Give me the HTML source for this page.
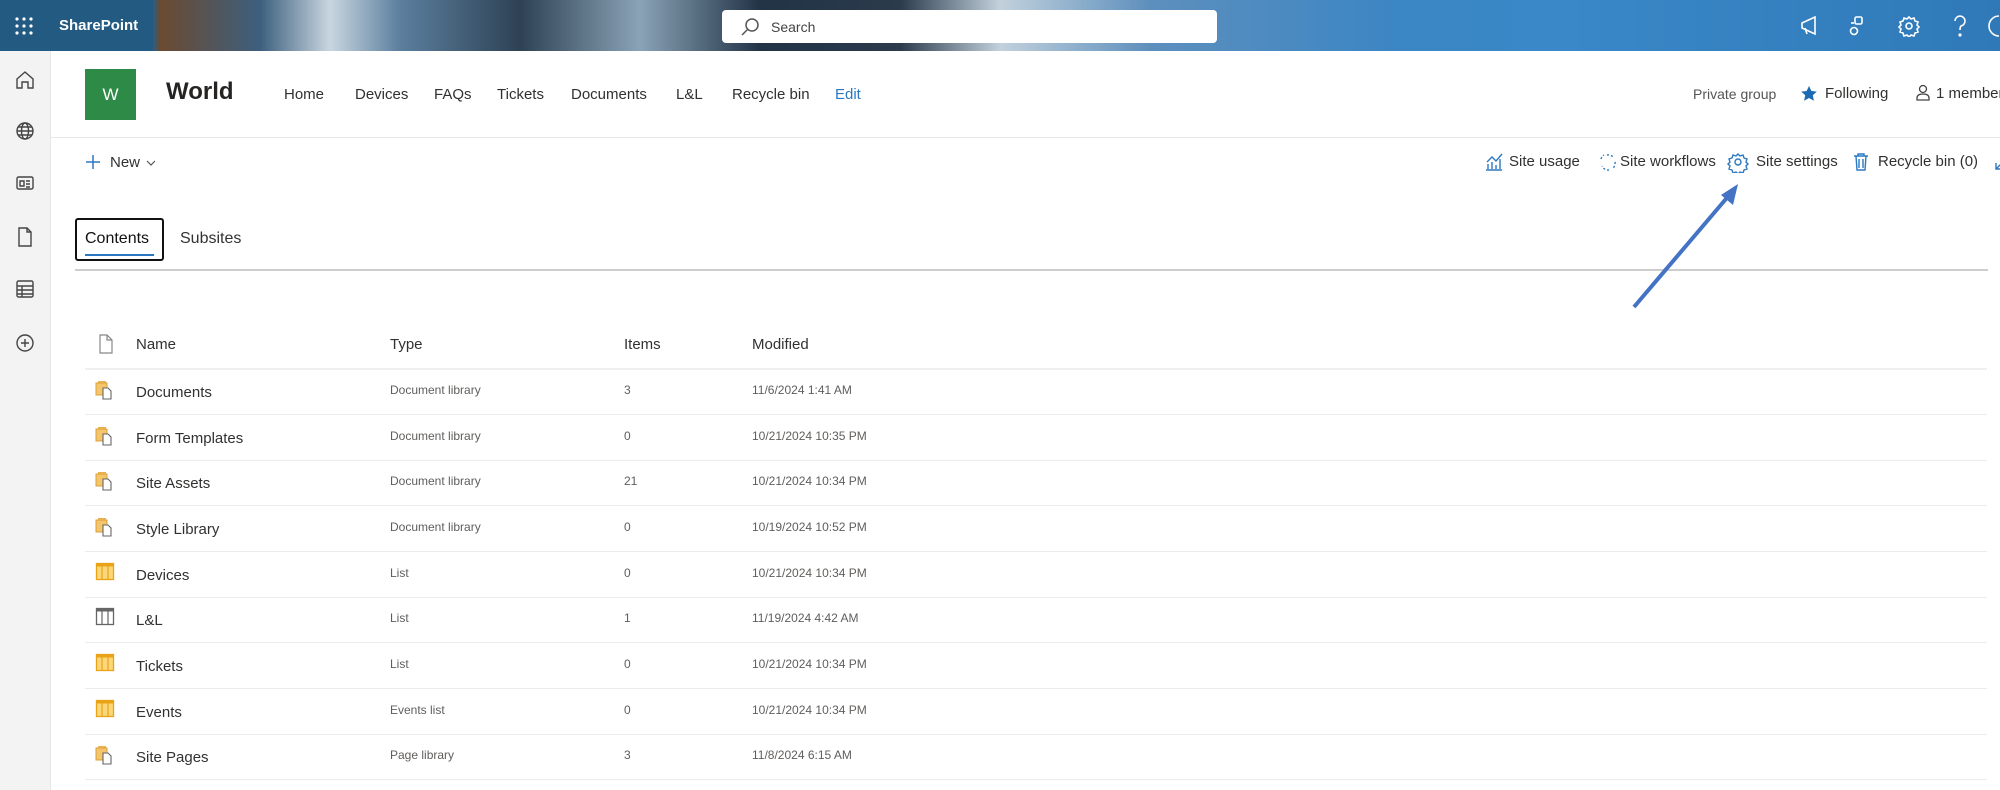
<!DOCTYPE html>
<html><head><meta charset="utf-8"><style>
*{margin:0;padding:0;box-sizing:border-box}
body{width:2000px;height:790px;overflow:hidden;background:#fff;font-family:"Liberation Sans",sans-serif;color:#323130;position:relative}
.a{position:absolute;white-space:nowrap}
.top{position:absolute;left:0;top:0;width:2000px;height:51px;background:linear-gradient(90deg,#2a5f86 0,#2a5f86 153px,#6b4a30 160px,#3d5f7e 260px,#c9d6e0 330px,#5b7f9e 400px,#2e4254 520px,#8aa3b6 640px,#223346 760px,#2b3b4c 900px,#c2d1dc 1000px,#5d8fbd 1150px,#3b86c4 1400px,#3a88c8 1560px,#2f79b8 2000px)}
.sp{position:absolute;left:0;top:0;width:153px;height:51px;background:#235a82}
.rail{position:absolute;left:0;top:51px;width:51px;height:739px;background:#f3f3f3;border-right:1px solid #e6e6e6}
.nav{font-size:15px;color:#323130;top:86px}
.cmd{font-size:15px;color:#323130;top:153px}
.hd{font-size:15px;color:#323130;top:336px}
.nm{font-size:15px;color:#323130}
.sm{font-size:12px;color:#605e5c}
.hl{position:absolute;left:85px;width:1902px;height:1px;background:#ececec}
</style></head><body>
<div class="top"></div>
<div class="sp"></div>
<svg class="a" style="left:15px;top:17px" width="18" height="18" fill="#fff"><g><circle cx="2" cy="2" r="1.6"/><circle cx="9" cy="2" r="1.6"/><circle cx="16" cy="2" r="1.6"/><circle cx="2" cy="9" r="1.6"/><circle cx="9" cy="9" r="1.6"/><circle cx="16" cy="9" r="1.6"/><circle cx="2" cy="16" r="1.6"/><circle cx="9" cy="16" r="1.6"/><circle cx="16" cy="16" r="1.6"/></g></svg>
<div class="a" style="left:59px;top:17px;color:#fff;font-weight:bold;font-size:15px">SharePoint</div>
<div class="a" style="left:722px;top:10px;width:495px;height:33px;background:#fff;border-radius:4px"></div>
<svg class="a" style="left:740px;top:17px" width="20" height="20" fill="none" stroke="#555" stroke-width="1.5"><circle cx="12" cy="8" r="6"/><path d="M8 12L2 18"/></svg>
<div class="a" style="left:771px;top:19px;font-size:14px;color:#444">Search</div>
<svg class="a" style="left:1799px;top:15px" width="200" height="22" fill="none" stroke="#fff" stroke-width="1.6">
<path d="M3 8L16 2V19L3 13Z M6 13L8 19"/>
<rect x="56" y="2" width="7" height="7" rx="1.5"/><circle cx="55" cy="16" r="3.5"/><path d="M52 8h3"/>
<circle cx="110" cy="11" r="3"/><path d="M110 2l2 2 3-1 1 3 3 1-1 3 2 2-2 2 1 3-3 1-1 3-3-1-2 2-2-2-3 1-1-3-3-1 1-3-2-2 2-2-1-3 3-1 1-3 3 1z"/>
<path d="M156 6a5 5 0 1 1 6 5c-1 1-1 2-1 4"/><circle cx="161" cy="20" r=".8" fill="#fff"/>
<circle cx="200" cy="11" r="10"/>
</svg>
<div class="rail"></div>
<svg class="a" style="left:14px;top:69px" width="22" height="290" fill="none" stroke="#444" stroke-width="1.4">
<path d="M3 10L11 3L19 10V19H14V13H8V19H3Z"/>
<g transform="translate(0,51)"><circle cx="11" cy="11" r="8"/><ellipse cx="11" cy="11" rx="3.5" ry="8"/><path d="M3 11h16M4.5 7h13M4.5 15h13"/></g>
<g transform="translate(0,103)"><rect x="3" y="5" width="16" height="12" rx="1.5"/><path d="M6 9h4v5H6zM12 9h4M12 12h4M12 15h4"/></g>
<g transform="translate(0,157)"><path d="M5 2h8l4 4v14H5Z M13 2v4h4"/></g>
<g transform="translate(0,209)"><rect x="3" y="3" width="16" height="16" rx="1.5"/><path d="M3 8h16M3 12h16M3 16h16M8 8v11"/></g>
<g transform="translate(0,263)"><circle cx="11" cy="11" r="8"/><path d="M11 7v8M7 11h8"/></g>
</svg>
<div class="a" style="left:85px;top:69px;width:51px;height:51px;background:#2e8b47;color:#fff;font-size:17px;line-height:51px;text-align:center">W</div>
<div class="a" style="left:166px;top:78px;font-size:24px;font-weight:bold;color:#252423">World</div>
<div class="a nav" style="left:284px">Home</div>
<div class="a nav" style="left:355px">Devices</div>
<div class="a nav" style="left:434px">FAQs</div>
<div class="a nav" style="left:497px">Tickets</div>
<div class="a nav" style="left:571px">Documents</div>
<div class="a nav" style="left:676px">L&amp;L</div>
<div class="a nav" style="left:732px">Recycle bin</div>
<div class="a nav" style="left:835px;color:#2b78c2">Edit</div>
<div class="a" style="left:1693px;top:86px;font-size:14px;color:#555">Private group</div>
<svg class="a" style="left:1800px;top:85px" width="18" height="18"><path d="M9 1l2.4 5 5.4.6-4 3.7 1.1 5.4L9 13l-4.9 2.7 1.1-5.4-4-3.7 5.4-.6z" fill="#1c6ab3"/></svg>
<div class="a" style="left:1825px;top:85px;font-size:15px;color:#323130">Following</div>
<svg class="a" style="left:1915px;top:84px" width="16" height="18" fill="none" stroke="#444" stroke-width="1.3"><circle cx="8" cy="5" r="3.5"/><path d="M2 16v-2q0-4 6-4t6 4v2z"/></svg>
<div class="a" style="left:1936px;top:85px;font-size:15px;color:#323130">1 member</div>
<div class="a" style="left:51px;top:137px;width:1949px;height:1px;background:#e8e8e8"></div>
<svg class="a" style="left:85px;top:154px" width="16" height="16" stroke="#2b78c2" stroke-width="1.5"><path d="M8 1v14M1 8h14"/></svg>
<div class="a cmd" style="left:110px;top:154px">New</div>
<svg class="a" style="left:146px;top:159px" width="10" height="8" fill="none" stroke="#555" stroke-width="1.2"><path d="M1 2l4 4 4-4"/></svg>
<svg class="a" style="left:1484px;top:151px" width="520" height="22" fill="none" stroke="#2b78c2" stroke-width="1.4">
<path d="M2 19h16M4 18v-5M8 18v-7M12 18v-4M16 18V8M3 11l5-5 4 4 6-7"/>
<path d="M123 4a7 7 0 0 1 7 3M131 11a7 7 0 0 1-3 7M125 19a7 7 0 0 1-7-4M117 8a7 7 0 0 1 3-4" stroke-dasharray="2 2"/>
<g transform="translate(245,2)"><circle cx="9" cy="9" r="3"/><path d="M9 1l2 2 3-1 1 3 3 1-1 3 2 2-2 2 1 3-3 1-1 3-3-1-2 2-2-2-3 1-1-3-3-1 1-3-2-2 2-2-1-3 3-1 1-3 3 1z"/></g>
<path d="M370 5h14M374 5V3h6v2M372 5l1 14h8l1-14M375 8v9M379 8v9"/>
<path d="M512 18l6-6M512 12v6h6"/>
</svg>
<div class="a cmd" style="left:1509px">Site usage</div>
<div class="a cmd" style="left:1620px">Site workflows</div>
<div class="a cmd" style="left:1756px">Site settings</div>
<div class="a cmd" style="left:1878px">Recycle bin (0)</div>
<div class="a" style="left:75px;top:218px;width:89px;height:43px;border:2px solid #111;border-radius:3px"></div>
<div class="a" style="left:85px;top:230px;font-size:16px;color:#111">Contents</div>
<div class="a" style="left:85px;top:254px;width:69px;height:2px;background:#2b78c2"></div>
<div class="a" style="left:180px;top:230px;font-size:16px;color:#333">Subsites</div>
<div class="a" style="left:75px;top:269px;width:1913px;height:2px;background:#cdcdcd"></div>
<svg class="a" style="left:1620px;top:175px" width="130" height="140"><path d="M14 132L111 18" stroke="#4472c4" stroke-width="4"/><path d="M118 9L101 20L113 30Z" fill="#4472c4"/></svg>
<svg class="a" style="left:98px;top:334px" width="16" height="20" fill="none" stroke="#888" stroke-width="1.2"><path d="M2 1h7l5 5v13H2Z M9 1v5h5"/></svg>
<div class="a hd" style="left:136px">Name</div>
<div class="a hd" style="left:390px">Type</div>
<div class="a hd" style="left:624px">Items</div>
<div class="a hd" style="left:752px">Modified</div>
<div class="hl" style="top:368px;height:2px;background:#efefef"></div>
<div id="rows"></div>
<script>
var R=[["Documents","Document library","3","11/6/2024 1:41 AM","d"],["Form Templates","Document library","0","10/21/2024 10:35 PM","d"],["Site Assets","Document library","21","10/21/2024 10:34 PM","d"],["Style Library","Document library","0","10/19/2024 10:52 PM","d"],["Devices","List","0","10/21/2024 10:34 PM","l"],["L&L","List","1","11/19/2024 4:42 AM","g"],["Tickets","List","0","10/21/2024 10:34 PM","l"],["Events","Events list","0","10/21/2024 10:34 PM","l"],["Site Pages","Page library","3","11/8/2024 6:15 AM","d"]];
var h="";
R.forEach(function(r,i){var y=369+i*45.65;
var ic;
if(r[4]=="d")ic='<svg class="a" style="left:95px;top:'+(y+11)+'px" width="20" height="20"><rect x="1" y="3" width="11" height="12" fill="#f4c56a" stroke="#d9a03c"/><rect x="3" y="1" width="8" height="3" fill="#e9b04f"/><path d="M8 8h5l3 3v8H8Z" fill="#fff" stroke="#666" stroke-width="1.1"/></svg>';
else{var c=r[4]=="l"?"#e8a317":"#666",f=r[4]=="l"?"#fbd77a":"#fff";
ic='<svg class="a" style="left:95px;top:'+(y+10)+'px" width="20" height="20"><rect x="1.5" y="1.5" width="17" height="16" fill="'+f+'" stroke="'+c+'" stroke-width="1.3"/><rect x="1.5" y="1.5" width="17" height="3" fill="'+c+'"/><path d="M7 4v14M13 4v14" stroke="'+c+'" stroke-width="1.2"/></svg>';}
h+=ic+'<div class="a nm" style="left:136px;top:'+(y+15)+'px">'+r[0].replace("&","&amp;")+'</div>';
h+='<div class="a sm" style="left:390px;top:'+(y+14)+'px">'+r[1]+'</div>';
h+='<div class="a sm" style="left:624px;top:'+(y+14)+'px">'+r[2]+'</div>';
h+='<div class="a sm" style="left:752px;top:'+(y+14)+'px">'+r[3]+'</div>';
h+='<div class="hl" style="top:'+(y+45)+'px"></div>';});
document.getElementById("rows").innerHTML=h;
</script>
</body></html>
